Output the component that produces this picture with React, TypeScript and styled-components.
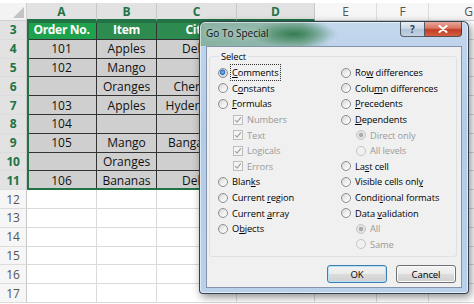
import React from "react";
import styled, { createGlobalStyle } from "styled-components";

const GlobalStyle = createGlobalStyle`
  html, body {
    margin: 0;
    padding: 0;
    background: #fff;
  }
  body {
    width: 474px;
    height: 304px;
    overflow: hidden;
  }
`;

const Screen = styled.div`
  position: relative;
  width: 474px;
  height: 304px;
  overflow: hidden;
  box-sizing: border-box;
  padding-top: 3px;
  background: #fff;
  font-family: "Open Sans", "Noto Sans", sans-serif;
`;

const Sheet = styled.div`
  position: relative;
  display: grid;
  grid-template-columns: 27px 70px 60px 80px 78px 62px 52px 80px;
  grid-template-rows: 18px repeat(15, 18.8px);
  font-size: 12px;
`;

const Corner = styled.div`
  display: flex;
  align-items: flex-end;
  justify-content: flex-end;
  padding: 0 2px 2px 0;
  background: #f3f3f3;
  border-right: 1px solid #d0d0d0;
  border-bottom: 1px solid #d0d0d0;
`;

const ColHead = styled.div<{ $sel: boolean }>`
  display: flex;
  align-items: center;
  justify-content: center;
  background: ${(p) => (p.$sel ? "#e2e2e2" : "#f6f6f6")};
  color: ${(p) => (p.$sel ? "#217346" : "#555")};
  font-weight: ${(p) => (p.$sel ? 700 : 400)};
  border-right: 1px solid ${(p) => (p.$sel ? "#c8c8c8" : "#dcdcdc")};
  border-bottom: ${(p) => (p.$sel ? "2px solid #217346" : "1px solid #d0d0d0")};
`;

const RowHead = styled.div<{ $sel: boolean }>`
  display: flex;
  align-items: center;
  justify-content: center;
  background: ${(p) => (p.$sel ? "#e2e2e2" : "#f6f6f6")};
  color: ${(p) => (p.$sel ? "#217346" : "#555")};
  font-weight: ${(p) => (p.$sel ? 700 : 400)};
  letter-spacing: ${(p) => (p.$sel ? "-0.3px" : "0")};
  border-right: 1px solid #c8c8c8;
  border-bottom: 1px solid #dcdcdc;
`;

type CellKind = "title" | "active" | "data" | "empty";

const Cell = styled.div<{ $kind: CellKind }>`
  display: flex;
  align-items: center;
  justify-content: center;
  overflow: hidden;
  white-space: nowrap;
  background: ${(p) =>
    p.$kind === "active"
      ? "#1ea24e"
      : p.$kind === "title"
      ? "#2e8b50"
      : p.$kind === "data"
      ? "#cfcfcf"
      : "#fff"};
  color: ${(p) => (p.$kind === "title" || p.$kind === "active" ? "#fff" : "#111")};
  font-weight: ${(p) => (p.$kind === "title" || p.$kind === "active" ? 700 : 400)};
  letter-spacing: ${(p) => (p.$kind === "title" || p.$kind === "active" ? "-0.3px" : "0")};
  border-right: 1px solid ${(p) => (p.$kind === "empty" ? "#dadada" : "#333")};
  border-bottom: 1px solid ${(p) => (p.$kind === "empty" ? "#dadada" : "#333")};
`;

/* absolutely positioned grid child: takes the A3:D11 area without using up cells */
const Selection = styled.div`
  position: absolute;
  inset: 0;
  grid-column: 2 / 6;
  grid-row: 2 / 11;
  border: 2px solid #217346;
  pointer-events: none;
  z-index: 1;
`;

/* ---------- dialog ---------- */

const Dialog = styled.div`
  position: absolute;
  left: 199px;
  top: 21px;
  width: 270px;
  height: 273px;
  box-sizing: border-box;
  display: flex;
  flex-direction: column;
  border: 1px solid rgba(30, 40, 55, 0.85);
  border-radius: 6px 6px 4px 4px;
  background:
    radial-gradient(ellipse 44px 13px at 94px 12px, rgba(35, 115, 65, 0.85), rgba(35, 115, 65, 0)),
    linear-gradient(90deg, rgba(100, 155, 115, 0.6) 0, rgba(100, 155, 115, 0.5) 38%, rgba(100, 155, 115, 0) 48%) top / 100% 24px no-repeat,
    linear-gradient(180deg, #c3d7ec 0, #b2cbe7 40%, #bad1ea 100%);
  box-shadow: 2px 3px 9px rgba(0, 0, 0, 0.45), inset 0 0 0 1px rgba(255, 255, 255, 0.55);
  z-index: 5;
`;

const TitleBar = styled.div`
  display: flex;
  align-items: flex-start;
  height: 24px;
  flex: none;
  padding: 0 6px;
`;

const Title = styled.div`
  flex: 1;
  line-height: 23px;
  font-size: 10px;
  color: #111;
  text-shadow: 0 0 6px rgba(255, 255, 255, 0.8);
`;

const CaptionButton = styled.div<{ $close?: boolean }>`
  display: flex;
  align-items: center;
  justify-content: center;
  width: ${(p) => (p.$close ? 37 : 25)}px;
  height: 15px;
  box-sizing: border-box;
  border: 1px solid rgba(40, 50, 65, 0.75);
  border-top: none;
  border-radius: ${(p) => (p.$close ? "0 0 4px 0" : "0 0 0 4px")};
  border-left-width: ${(p) => (p.$close ? 0 : 1)}px;
  background: ${(p) =>
    p.$close
      ? "linear-gradient(180deg, #e9a99b 0, #d7725f 45%, #c23c26 55%, #d2603f 100%)"
      : "linear-gradient(180deg, #e7eef6 0, #cbd8e7 45%, #b3c4d8 55%, #c3d3e4 100%)"};
  color: ${(p) => (p.$close ? "#fff" : "#2f3e52")};
  font-size: 10px;
  font-weight: 700;
`;

const Client = styled.div`
  flex: 1;
  display: flex;
  flex-direction: column;
  margin: 0 6px 5px 6px;
  padding: 0 4px 4px 2px;
  background: #f0f0f0;
  border: 1px solid #8495ab;
  font-size: 9.3px;
  font-weight: 500;
  letter-spacing: -0.1px;
  color: #000;
`;

const Group = styled.fieldset`
  margin: 3px 0 0 0;
  padding: 2px 0 4px 8px;
  border: 1px solid #dde1e6;
  border-radius: 3px;
  min-width: 0;
`;

const Legend = styled.legend`
  margin-left: 1px;
  padding: 0 2px;
  font-size: 9.3px;
  line-height: 13px;
`;

const Columns = styled.div`
  display: grid;
  grid-template-columns: 123px 1fr;
`;

const Column = styled.div`
  display: flex;
  flex-direction: column;
`;

const Option = styled.div<{ $indent?: boolean; $disabled?: boolean }>`
  display: flex;
  align-items: center;
  gap: 4px;
  height: 15.6px;
  padding-left: ${(p) => (p.$indent ? 15 : 0)}px;
  color: ${(p) => (p.$disabled ? "#9a9a9a" : "#000")};
  white-space: nowrap;
`;

const Radio = styled.span<{ $on?: boolean; $disabled?: boolean }>`
  flex: none;
  width: 10px;
  height: 10px;
  box-sizing: border-box;
  border-radius: 50%;
  border: 1px solid ${(p) => (p.$disabled ? "#c4c4c4" : "#8a8c8e")};
  background: ${(p) =>
    p.$on
      ? p.$disabled
        ? "radial-gradient(circle, #a9a9a9 0 1.8px, #e4e4e4 2.6px)"
        : "radial-gradient(circle at 45% 40%, #8fcaf6 0, #2667b4 2.4px, #d5dde7 3px)"
      : p.$disabled
      ? "#f1f1f1"
      : "linear-gradient(135deg, #d5d5d5 0, #f7f7f7 70%)"};
`;

const Check = styled.span`
  flex: none;
  display: flex;
  align-items: center;
  justify-content: center;
  width: 10px;
  height: 10px;
  box-sizing: border-box;
  border: 1px solid #bdbdbd;
  background: #f4f4f4;
`;

const Focus = styled.span`
  outline: 1px dotted #333;
  outline-offset: 1px;
`;

const Key = styled.span`
  text-decoration: underline;
  text-underline-offset: 1px;
`;

const ButtonRow = styled.div`
  display: flex;
  justify-content: flex-end;
  gap: 9px;
  margin-top: auto;
  padding-right: 1px;
`;

const Button = styled.div<{ $default?: boolean }>`
  display: flex;
  align-items: center;
  justify-content: center;
  width: 60px;
  height: 18px;
  box-sizing: border-box;
  border-radius: 3px;
  border: 1px solid ${(p) => (p.$default ? "#3c7fb1" : "#707070")};
  background: linear-gradient(180deg, #f3f3f3 0, #ebebeb 48%, #dcdcdc 52%, #d0d0d0 100%);
  box-shadow: ${(p) => (p.$default ? "inset 0 0 0 1px #b6e2f8" : "inset 0 0 0 1px #fbfbfb")};
  font-size: 9.5px;
  color: #000;
`;

type Opt = {
  label: string;
  key?: number;
  kind: "radio" | "check";
  on?: boolean;
  indent?: boolean;
  disabled?: boolean;
  focus?: boolean;
};

const leftOptions: Opt[] = [
  { label: "Comments", key: 0, kind: "radio", on: true, focus: true },
  { label: "Constants", key: 1, kind: "radio" },
  { label: "Formulas", key: 0, kind: "radio" },
  { label: "Numbers", kind: "check", indent: true, disabled: true },
  { label: "Text", kind: "check", indent: true, disabled: true },
  { label: "Logicals", kind: "check", indent: true, disabled: true },
  { label: "Errors", kind: "check", indent: true, disabled: true },
  { label: "Blanks", key: 4, kind: "radio" },
  { label: "Current region", key: 8, kind: "radio" },
  { label: "Current array", key: 8, kind: "radio" },
  { label: "Objects", key: 1, kind: "radio" },
];

const rightOptions: Opt[] = [
  { label: "Row differences", key: 2, kind: "radio" },
  { label: "Column differences", key: 4, kind: "radio" },
  { label: "Precedents", key: 0, kind: "radio" },
  { label: "Dependents", key: 0, kind: "radio" },
  { label: "Direct only", kind: "radio", indent: true, disabled: true, on: true },
  { label: "All levels", kind: "radio", indent: true, disabled: true },
  { label: "Last cell", key: 2, kind: "radio" },
  { label: "Visible cells only", key: 17, kind: "radio" },
  { label: "Conditional formats", key: 5, kind: "radio" },
  { label: "Data validation", key: 5, kind: "radio" },
  { label: "All", kind: "radio", indent: true, disabled: true, on: true },
  { label: "Same", kind: "radio", indent: true, disabled: true },
];

function Label({ text, k }: { text: string; k?: number }) {
  if (k === undefined) return <>{text}</>;
  return (
    <>
      {text.slice(0, k)}
      <Key>{text[k]}</Key>
      {text.slice(k + 1)}
    </>
  );
}

function OptionItem({ o }: { o: Opt }) {
  const label = <Label text={o.label} k={o.key} />;
  return (
    <Option $indent={o.indent} $disabled={o.disabled}>
      {o.kind === "radio" ? (
        <Radio $on={o.on} $disabled={o.disabled} />
      ) : (
        <Check>
          <svg width="8" height="8" viewBox="0 0 8 8">
            <path d="M1.2 4.2 L3.1 6.2 L6.9 1.4" fill="none" stroke="#a0a0a0" strokeWidth="1.2" />
          </svg>
        </Check>
      )}
      {o.focus ? <Focus>{label}</Focus> : <span>{label}</span>}
    </Option>
  );
}

const columns = ["A", "B", "C", "D", "E", "F", "G"];
const titles = ["Order No.", "Item", "City", "Amount"];
const data: string[][] = [
  ["101", "Apples", "Delhi", ""],
  ["102", "Mango", "", ""],
  ["", "Oranges", "Chennai", ""],
  ["103", "Apples", "Hyderabad", ""],
  ["104", "", "", ""],
  ["105", "Mango", "Bangalore", ""],
  ["", "Oranges", "", ""],
  ["106", "Bananas", "Delhi", ""],
];

export default function App() {
  const rowNums = Array.from({ length: 15 }, (_, i) => i + 3);
  return (
    <Screen>
      <GlobalStyle />
      <Sheet>
        <Corner>
          <svg width="11" height="11" viewBox="0 0 11 11">
            <path d="M11 0 L11 11 L0 11 Z" fill="#c4c4c4" />
          </svg>
        </Corner>
        {columns.map((c, i) => (
          <ColHead key={c} $sel={i < 4}>
            {c}
          </ColHead>
        ))}
        {rowNums.map((r) => {
          const sel = r <= 11;
          return (
            <React.Fragment key={r}>
              <RowHead $sel={sel}>{r}</RowHead>
              {columns.map((c, ci) => {
                let kind: CellKind = "empty";
                let text = "";
                if (sel && ci < 4) {
                  if (r === 3) {
                    kind = ci === 0 ? "active" : "title";
                    text = titles[ci];
                  } else {
                    kind = "data";
                    text = data[r - 4][ci];
                  }
                }
                return (
                  <Cell key={c} $kind={kind}>
                    {text}
                  </Cell>
                );
              })}
            </React.Fragment>
          );
        })}
        <Selection />
      </Sheet>

      <Dialog>
        <TitleBar>
          <Title>Go To Special</Title>
          <CaptionButton>?</CaptionButton>
          <CaptionButton $close>
            <svg width="10" height="8" viewBox="0 0 10 8">
              <path d="M1.5 1 L8.5 7 M8.5 1 L1.5 7" stroke="#fff" strokeWidth="2" strokeLinecap="round" />
            </svg>
          </CaptionButton>
        </TitleBar>
        <Client>
          <Group>
            <Legend>Select</Legend>
            <Columns>
              <Column>
                {leftOptions.map((o) => (
                  <OptionItem key={o.label} o={o} />
                ))}
              </Column>
              <Column>
                {rightOptions.map((o) => (
                  <OptionItem key={o.label} o={o} />
                ))}
              </Column>
            </Columns>
          </Group>
          <ButtonRow>
            <Button $default>OK</Button>
            <Button>Cancel</Button>
          </ButtonRow>
        </Client>
      </Dialog>
    </Screen>
  );
}
